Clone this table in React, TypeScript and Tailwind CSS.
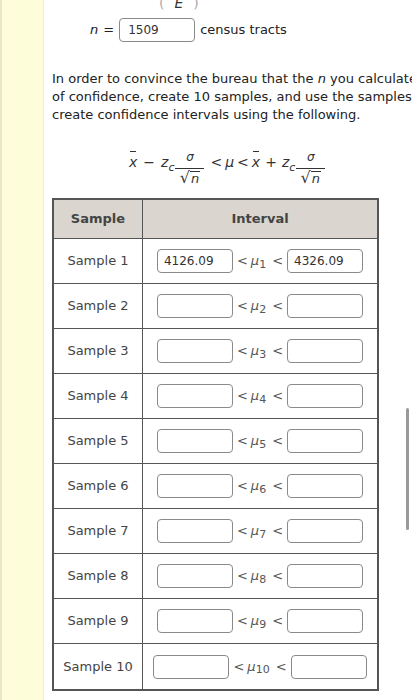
import React from "react";

const font = { fontFamily: '"DejaVu Sans", Verdana, sans-serif' };

function Frac() {
  return (
    <span className="inline-flex flex-col items-center relative top-[5px] mx-[1px]">
      <span className="italic text-[12px] leading-[15px] pb-[3px]">σ</span>
      <span className="border-t border-[#333] w-[29px] flex justify-center items-end pt-[1px]">
        <span className="text-[16px] leading-[16px]">√</span>
        <span className="italic text-[13px] border-t border-[#333] leading-[14px] px-[1px]">n</span>
      </span>
    </span>
  );
}

function XBar() {
  return (
    <span className="relative inline-block italic">
      <span className="absolute left-[1px] right-[1px] top-[-1px] border-t border-[#333]" />x
    </span>
  );
}

function Box({ value, w }: { value?: string; w: number }) {
  return (
    <div
      className="h-[24px] border border-[#8a8a8a] rounded-[4px] bg-white text-[12px] text-[#333] pl-[6px] flex items-center"
      style={{ width: w }}
    >
      {value}
    </div>
  );
}

export default function App() {
  const rows = Array.from({ length: 10 }, (_, i) => i + 1);
  return (
    <div className="w-[412px] h-[700px] overflow-hidden bg-white flex text-[#222]" style={font}>
      <div className="w-[44px] shrink-0 bg-[#fefdd9] border-l-2 border-[#e9e6c6] border-r border-r-[#f0edc8]" />
      <div className="flex-1 relative">
        <div className="absolute left-[115px] top-[-5px] text-[14px] leading-[16px] text-[#333] flex gap-[10px] italic">
          <span className="not-italic text-[#aaa]">(</span>
          <span>E</span>
          <span className="not-italic text-[#aaa]">)</span>
        </div>
        <div className="flex items-center mt-[18px] ml-[46px] text-[13px]">
          <span className="italic">n</span>
          <span className="ml-[5px] mr-[5px]">=</span>
          <div className="h-[24px] w-[76px] border border-[#8a8a8a] rounded-[4px] text-[12px] text-[#333] pl-[8px] flex items-center">1509</div>
          <span className="ml-[5px]">census tracts</span>
        </div>
        <div className="mt-[28px] ml-[8px] text-[13px] leading-[18px] whitespace-nowrap">
          <div>In order to convince the bureau that the <span className="italic">n</span> you calculated</div>
          <div>of confidence, create 10 samples, and use the samples to</div>
          <div>create confidence intervals using the following.</div>
        </div>
        <div className="mt-[13px] ml-[85px] flex items-center text-[14px] h-[51px] whitespace-nowrap text-[#333]">
          <XBar />
          <span className="mx-[6px]">−</span>
          <span className="italic">z</span>
          <span className="italic text-[11px] relative top-[6px]">c</span>
          <Frac />
          <span className="ml-[5px] mr-[3px]">&lt;</span>
          <span className="italic">μ</span>
          <span className="mx-[3px]">&lt;</span>
          <XBar />
          <span className="mx-[5px]">+</span>
          <span className="italic">z</span>
          <span className="italic text-[11px] relative top-[6px]">c</span>
          <Frac />
        </div>
        <div className="mt-[10px] ml-[8px] w-[327px] border-2 border-[#555]">
          <div className="flex h-[39px] bg-[#dad6cf] border-b border-[#555] text-[13px] font-bold text-[#444]">
            <div className="w-[89px] border-r border-[#555] flex items-center justify-center">Sample</div>
            <div className="flex-1 flex items-center justify-center">Interval</div>
          </div>
          {rows.map((n) => (
            <div
              key={n}
              className={`flex h-[45px] text-[13px] text-[#444] ${n < 10 ? "border-b border-[#555]" : ""}`}
            >
              <div className="w-[89px] border-r border-[#555] flex items-center justify-center">Sample {n}</div>
              <div className="flex-1 flex items-center justify-center gap-[4px]">
                <Box w={76} value={n === 1 ? "4126.09" : undefined} />
                <span className="text-[#555] flex items-center">
                  &lt;<span className="italic ml-[3px]">μ</span>
                  <span className="text-[11px] relative top-[4px]">{n}</span>
                  <span className="ml-[6px]">&lt;</span>
                </span>
                <Box w={76} value={n === 1 ? "4326.09" : undefined} />
              </div>
            </div>
          ))}
        </div>
        <div className="absolute left-[362px] top-[408px] w-[3px] h-[122px] bg-[#999] rounded" />
      </div>
    </div>
  );
}
